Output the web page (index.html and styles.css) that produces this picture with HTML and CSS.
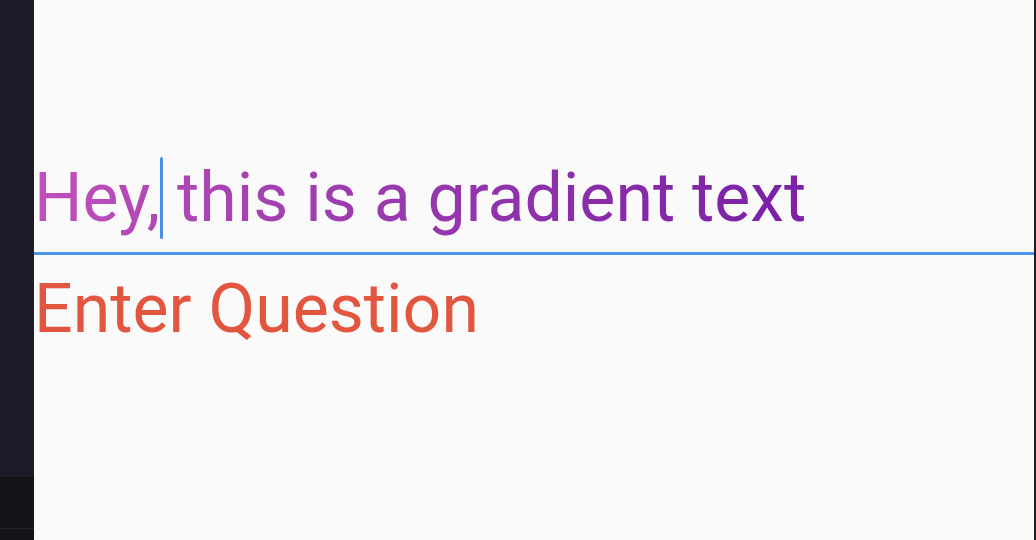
FILE: index.html
```html
<!DOCTYPE html>
<html>
<head>
<meta charset="utf-8">
<link rel="stylesheet" href="styles.css">
</head>
<body>
<div class="app">
  <aside class="sidebar">
    <div class="sidebar-fill"></div>
    <div class="sidebar-bar"></div>
    <div class="sidebar-foot"></div>
  </aside>
  <main class="main">
    <div class="field">
      <div class="input-line">
        <span class="grad">Hey,</span><span class="caret"></span><span class="grad">&nbsp;this is a gradient text</span>
      </div>
    </div>
    <div class="label">Enter Question</div>
  </main>
  <div class="edge"></div>
</div>
</body>
</html>
```

FILE: styles.css
```css
html, body {
  margin: 0;
  padding: 0;
  width: 1036px;
  height: 540px;
  overflow: hidden;
  background: #fafafa;
}
.app {
  display: flex;
  height: 540px;
  font-family: Roboto, "Noto Sans", sans-serif;
}
.sidebar {
  width: 34px;
  flex: none;
  display: flex;
  flex-direction: column;
  background: #1b1c28;
}
.sidebar-fill {
  flex: 1;
  background: #1b1c28;
}
.sidebar-bar {
  height: 50px;
  border-top: 1px solid #101016;
  border-bottom: 1px solid #23242c;
  background: #14141b;
}
.sidebar-foot {
  height: 11px;
  background: #13131a;
}
.main {
  flex: 1;
  background: #fafafa;
  padding-top: 157px;
}
.edge {
  width: 2px;
  flex: none;
  background: #1a1a20;
}
.field {
  border-bottom: 3px solid #4a96e8;
  padding-bottom: 13px;
}
.input-line {
  font-size: 68px;
  line-height: 82px;
  height: 82px;
  white-space: nowrap;
}
.grad {
  background: linear-gradient(90deg, #c652bd 0px, #a442b0 250px, #7b22a6 770px);
  background-attachment: fixed;
  -webkit-background-clip: text;
  background-clip: text;
  color: transparent;
}
.caret {
  position: relative;
  display: inline-block;
  width: 0;
  height: 82px;
  vertical-align: top;
}
.caret::after {
  content: "";
  position: absolute;
  left: 0;
  top: 0;
  width: 3px;
  height: 82px;
  background: #4a90e2;
  border-radius: 1.5px;
}
.label {
  font-size: 68px;
  line-height: 80px;
  color: #e2553f;
  margin-top: 14px;
}
```
